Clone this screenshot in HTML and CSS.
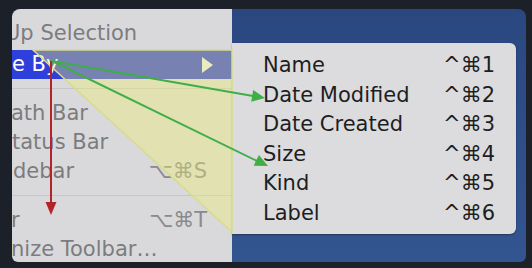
FILE: index.html
```html
<!DOCTYPE html>
<html>
<head lang="en">
    <meta charset="UTF-8">
    <title>Arrange By</title>
    <link rel="stylesheet" href="styles.css">
</head>
<body>
    <div id="screen">
        <div id="menu">
            <div class="item first"><span class="t-up">Up Selection</span></div>
            <div class="item on"><span>e By</span>
                <svg class="more" width="11" height="16" viewBox="0 0 11 16"><polygon points="0,0 11,8 0,16"/></svg>
            </div>
            <div class="sep"></div>
            <div class="item"><span class="t-path">ath Bar</span></div>
            <div class="item"><span>tatus Bar</span></div>
            <div class="item"><span class="t-side">debar</span><span class="key">⌥⌘S</span></div>
            <div class="sep"></div>
            <div class="item"><span class="t-tool">r</span><span class="key">⌥⌘T</span></div>
            <div class="item"><span class="t-tool">nize Toolbar…</span></div>
        </div>
        <div id="desk">
            <ul id="submenu">
                <li><span>Name</span><span>^⌘1</span></li>
                <li><span>Date Modified</span><span>^⌘2</span></li>
                <li><span>Date Created</span><span>^⌘3</span></li>
                <li><span>Size</span><span>^⌘4</span></li>
                <li><span>Kind</span><span>^⌘5</span></li>
                <li><span>Label</span><span>^⌘6</span></li>
            </ul>
        </div>
    </div>
    <svg id="notes" width="532" height="268" viewBox="0 0 532 268">
        <polygon class="zone" points="33,50 232,50 232,232"/>
        <line class="red" x1="51" y1="61" x2="51" y2="203"/>
        <polygon class="red-head" points="51,215 45.5,202 56.5,202"/>
        <line class="green" x1="52" y1="61" x2="253" y2="96"/>
        <polygon class="green-head" points="265,98 251.2,101.7 253.2,89.9"/>
        <line class="green" x1="52" y1="61" x2="257" y2="161"/>
        <polygon class="green-head" points="268,166 253.7,165.7 258.9,154.9"/>
    </svg>
</body>
</html>
```

FILE: styles.css
```css
*{
    padding:0;
    margin:0;
    box-sizing:border-box;
}
li{
    list-style:none;
}
body{
    width:532px;
    height:268px;
    overflow:hidden;
    position:relative;
    background:#1b2029;
    font-family:"DejaVu Sans", Verdana, sans-serif;
    font-size:21px;
}
#screen{
    display:flex;
    height:268px;
    padding:9px 6px 6px 12px;
}
#menu{
    width:220px;
    background:#d9d9db;
    border-radius:8px 0 0 6px;
    overflow:hidden;
    padding-top:10px;
    color:#7c7c7f;
}
#menu .item{
    display:flex;
    justify-content:space-between;
    align-items:center;
    height:29px;
    line-height:29px;
    padding-right:25px;
    white-space:nowrap;
}
#menu .first{
    height:31px;
    align-items:flex-start;
}
#menu .on{
    background:#2e40dc;
    color:#fff;
    padding-right:19px;
}
#menu .more{
    fill:#e6e8f4;
}
#menu .key{
    color:#8a8a8d;
}
.t-up{
    margin-left:-7px;
}
.t-path{
    margin-left:-1px;
}
.t-side{
    margin-left:1px;
}
.t-tool{
    margin-left:-1px;
}
#menu .sep{
    height:1px;
    margin:9px 0 10px;
    background:#c6c6c8;
}
#desk{
    flex:1;
    background:linear-gradient(#2a4780, #33558f);
    border-radius:0 8px 6px 0;
    padding:34px 10px 0 0;
}
#submenu{
    background:#dcdcde;
    border-radius:0 6px 6px 0;
    box-shadow:0 1px 2px rgba(0,0,0,0.35);
    padding:8px 21px 5px 31px;
    color:#1e1e1e;
}
#submenu li{
    display:flex;
    justify-content:space-between;
    height:29.6px;
    line-height:29.6px;
    white-space:nowrap;
}
#notes{
    position:absolute;
    left:0;
    top:0;
    pointer-events:none;
}
#notes .zone{
    fill:rgba(240,240,110,0.38);
    stroke:#d8dc8a;
    stroke-width:1.5;
}
#notes .red{
    stroke:#b3232a;
    stroke-width:2;
}
#notes .red-head{
    fill:#b3232a;
}
#notes .green{
    stroke:#3fae49;
    stroke-width:2;
}
#notes .green-head{
    fill:#3fae49;
}
```
